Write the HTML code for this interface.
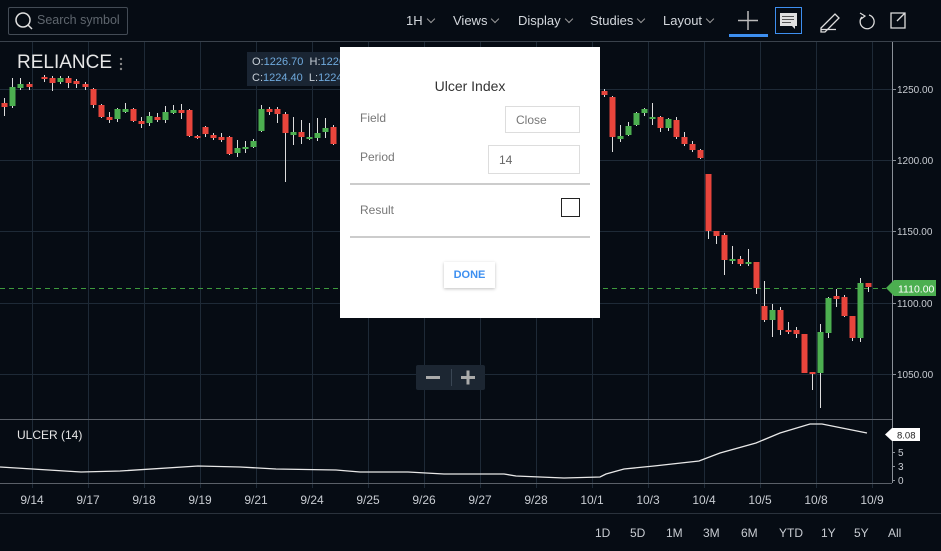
<!DOCTYPE html>
<html><head><meta charset="utf-8"><style>
*{margin:0;padding:0;box-sizing:border-box}
body{width:941px;height:551px;background:#060c14;font-family:"Liberation Sans",sans-serif;overflow:hidden;position:relative;color:#c8ccd2}
.a{position:absolute}
.menu{position:absolute;top:13px;font-size:13px;color:#d4d8dd}
.menu i{display:inline-block;width:6px;height:6px;border-right:1px solid #999;border-bottom:1px solid #999;transform:rotate(45deg);margin-left:5px;position:relative;top:-3px}
.rng{position:absolute;top:526px;font-size:12px;color:#c8ccd2}
</style></head><body>
<svg class="a" style="left:0;top:0" width="941" height="551" id="s">
<g stroke="#1e2a37" stroke-width="1" id="grid"></g>
<line x1="0" y1="41.5" x2="941" y2="41.5" stroke="#3a424c"/>
<line x1="0" y1="419.5" x2="892" y2="419.5" stroke="#5a6068"/>
<line x1="0" y1="483.5" x2="892" y2="483.5" stroke="#5a6068"/>
<line x1="0" y1="513.5" x2="941" y2="513.5" stroke="#2a323c"/>
<line x1="892.5" y1="42" x2="892.5" y2="483" stroke="#8a9098"/>
<line x1="0" y1="288.5" x2="886" y2="288.5" stroke="#3d9a3d" stroke-dasharray="5,4"/>
<g id="c"></g>
<polyline fill="none" stroke="#e8e8e8" stroke-width="1.3" points="0,467 81,472 120,471 198,466 240,467 276,469 336,470 360,472 408,472 444,474 504,474 516,476 564,478 600,477 606,474 624,469 654,466 699,461 720,453 756,443 780,433 810,424 822,424 867,433"/>
<g font-size="10" fill="#c8ccd2">
<text x="897" y="93">1250.00</text><text x="897" y="164">1200.00</text><text x="897" y="235">1150.00</text><text x="897" y="307">1100.00</text><text x="897" y="378">1050.00</text>
<text x="898" y="456">5</text><text x="898" y="470">3</text><text x="898" y="484">0</text>
</g>
<g stroke="#8a9098"><line x1="892" y1="89.5" x2="896" y2="89.5"/><line x1="892" y1="160.5" x2="896" y2="160.5"/><line x1="892" y1="231.5" x2="896" y2="231.5"/><line x1="892" y1="303.5" x2="896" y2="303.5"/><line x1="892" y1="374.5" x2="896" y2="374.5"/><line x1="892" y1="452.5" x2="895" y2="452.5"/><line x1="892" y1="466.5" x2="895" y2="466.5"/><line x1="892" y1="480.5" x2="895" y2="480.5"/></g>
<path d="M886 288 L894 280 H936 V296 H894 Z" fill="#4caf50"/>
<text x="898" y="292.5" font-size="10.5" fill="#fff">1110.00</text>
<path d="M885 434.5 L892 428 H920 V441 H892 Z" fill="#fff"/>
<text x="897" y="438.5" font-size="9.5" fill="#222">8.08</text>
<g id="dl" font-size="12" fill="#c8ccd2" text-anchor="middle"></g>
</svg>

<div class="a" style="left:8px;top:7px;width:120px;height:28px;border:1px solid #434b55;border-radius:2px"></div>
<svg class="a" style="left:14px;top:11px" width="20" height="20"><circle cx="9" cy="9" r="7" fill="none" stroke="#e0e0e0" stroke-width="1.5"/><line x1="14" y1="14" x2="18" y2="18" stroke="#e0e0e0" stroke-width="1.5"/></svg>
<div class="a" style="left:37px;top:13px;font-size:12.5px;color:#5f666e">Search symbol</div>

<div class="menu" style="left:406px">1H<i></i></div>
<div class="menu" style="left:453px">Views<i></i></div>
<div class="menu" style="left:518px">Display<i></i></div>
<div class="menu" style="left:590px">Studies<i></i></div>
<div class="menu" style="left:663px">Layout<i></i></div>
<svg class="a" style="left:729px;top:0" width="212" height="40">
<line x1="19" y1="11" x2="19" y2="30" stroke="#bbb" stroke-width="1.5"/><line x1="9" y1="20.5" x2="29" y2="20.5" stroke="#bbb" stroke-width="1.5"/>
<rect x="0" y="34" width="39" height="3" fill="#3d8ff0"/>
<rect x="46.5" y="7.5" width="26" height="26" fill="none" stroke="#3d8ff0"/>
<path d="M51 13 H68 V26 H66 V29 L63 26 H51 Z" fill="#e0e0e0"/>
<g stroke="#555" stroke-width="1"><line x1="53" y1="16.5" x2="65" y2="16.5"/><line x1="53" y1="19.5" x2="65" y2="19.5"/><line x1="53" y1="22.5" x2="62" y2="22.5"/></g>
<path d="M92 28 L106 14 L110 18 L96 32 H92 Z M92 29.5 H107" fill="none" stroke="#ddd" stroke-width="1.3"/>
<path d="M140 15 A7 7 0 1 1 133 17" fill="none" stroke="#ddd" stroke-width="1.3"/><path d="M131 13 L136 16 L132 19" fill="none" stroke="#ddd" stroke-width="1.2"/>
<path d="M174 13 H162 V28 H176 V16 M168 21 L176 13 M171 13 H176 V18" fill="none" stroke="#ddd" stroke-width="1.3"/>
</svg>

<div class="a" style="left:17px;top:52px;font-size:19px;color:#e6e6e6">RELIANCE</div>
<svg class="a" style="left:119px;top:57px" width="4" height="14"><circle cx="2" cy="2" r="1.2" fill="#888"/><circle cx="2" cy="7" r="1.2" fill="#888"/><circle cx="2" cy="12" r="1.2" fill="#888"/></svg>
<div class="a" style="left:247px;top:52px;width:95px;height:34px;background:#1a2533;font-size:11px;line-height:16px;padding:2px 5px;color:#c8d0d8;white-space:nowrap;overflow:hidden">O:<span style="color:#6fa9dc">1226.70</span> &nbsp;H:<span style="color:#6fa9dc">1226</span><br>C:<span style="color:#6fa9dc">1224.40</span> &nbsp;L:<span style="color:#6fa9dc">1224</span></div>

<div class="a" style="left:340px;top:47px;width:260px;height:271px;background:#fff;color:#555">
<div class="a" style="left:0;width:260px;top:31px;text-align:center;font-size:14px;color:#333">Ulcer Index</div>
<div class="a" style="left:20px;top:64px;font-size:12px;color:#777">Field</div>
<div class="a" style="left:165px;top:59px;width:75px;height:27px;border:1px solid #ddd;font-size:12px;color:#777;padding:6px 0 0 10px">Close</div>
<div class="a" style="left:20px;top:103px;font-size:12px;color:#777">Period</div>
<div class="a" style="left:148px;top:98px;width:92px;height:29px;border:1px solid #ddd;font-size:12px;color:#666;padding:7px 0 0 10px">14</div>
<div class="a" style="left:10px;top:136px;width:240px;height:2px;background:#ccc"></div>
<div class="a" style="left:20px;top:156px;font-size:12px;color:#777">Result</div>
<div class="a" style="left:221px;top:151px;width:19px;height:19px;border:1px solid #222"></div>
<div class="a" style="left:10px;top:189px;width:240px;height:2px;background:#ccc"></div>
<div class="a" style="left:104px;top:215px;width:51px;height:26px;box-shadow:0 1px 3px rgba(0,0,0,.25);font-size:11px;font-weight:bold;color:#3d8ff0;text-align:center;line-height:26px">DONE</div>
</div>

<div class="a" style="left:416px;top:365px;width:69px;height:25px;background:#1c2632;border-radius:2px"></div>
<svg class="a" style="left:416px;top:365px" width="69" height="25"><rect x="10" y="11" width="14" height="3" fill="#aaa"/><line x1="35.5" y1="4" x2="35.5" y2="21" stroke="#3a4654"/><rect x="45" y="11" width="14" height="3" fill="#aaa"/><rect x="50.5" y="5.5" width="3" height="14" fill="#aaa"/></svg>

<div class="a" style="left:17px;top:428px;font-size:12px;color:#e6e6e6">ULCER (14)</div>

<div class="rng" style="left:595px">1D</div><div class="rng" style="left:630px">5D</div><div class="rng" style="left:666px">1M</div><div class="rng" style="left:703px">3M</div><div class="rng" style="left:741px">6M</div><div class="rng" style="left:779px">YTD</div><div class="rng" style="left:821px">1Y</div><div class="rng" style="left:854px">5Y</div><div class="rng" style="left:888px">All</div>

<script>
var ns="http://www.w3.org/2000/svg",g=document.getElementById('grid'),c=document.getElementById('c'),dl=document.getElementById('dl');
function el(p,t,a){var e=document.createElementNS(ns,t);for(var k in a)e.setAttribute(k,a[k]);p.appendChild(e);return e;}
for(var i=0;i<16;i++){var x=32.5+56*i;el(g,'line',{x1:x,y1:42,x2:x,y2:483});}
[89.5,160.5,231.5,303.5,374.5].forEach(function(y){el(g,'line',{x1:0,y1:y,x2:892,y2:y});});
var L=['9/14','9/17','9/18','9/19','9/21','9/24','9/25','9/26','9/27','9/28','10/1','10/3','10/4','10/5','10/8','10/9'];
L.forEach(function(t,i){var e=el(dl,'text',{x:32+56*i,y:504});e.textContent=t;el(g,'line',{x1:32.5+56*i,y1:483,x2:32.5+56*i,y2:488});});
var R='#e8453c',G='#4caf50';
var d=[[4,103,107,R,98,116],[12,87,106,G,78,108],[20,84,88,G,78,90],[29,84,87,R,82,90],[44,77,79,R,75,82],[52,78,83,R,76,91],[60,78,82,G,76,84],[68,78,83,R,76,88],[76,81,84,R,79,88],[85,84,87,R,82,90],[93,89,105,R,88,108],[101,105,117,R,104,118],[109,117,120,R,112,123],[117,109,119,G,108,122],[125,109,112,G,103,113],[133,109,121,R,108,122],[141,121,124,R,117,128],[149,116,123,G,112,126],[157,117,120,R,113,122],[165,112,120,G,106,123],[173,110,113,G,105,114],[181,110,113,R,104,119],[189,110,136,R,109,137],[197,136,138,R,135,139],[205,127,134,R,126,137],[213,135,138,R,133,140],[221,137,140,R,133,142],[229,137,154,R,136,155],[237,148,153,G,140,157],[245,147,148,G,141,153],[253,141,147,G,139,148],[261,109,131,G,105,132],[269,109,112,R,107,115],[277,109,114,R,107,123],[285,114,133,R,112,182],[293,132,135,G,117,145],[301,132,137,R,120,144],[309,137,139,G,123,140],[317,133,138,G,118,141],[325,128,132,G,118,138],[333,127,144,R,125,145],
[604,91,95,R,89,97],[612,97,137,R,96,152],[620,136,139,G,125,142],[628,126,135,G,122,136],[636,113,125,G,112,126],[644,109,113,G,108,116],[652,117,119,G,103,125],[660,117,128,R,116,132],[668,119,128,G,118,131],[676,120,137,R,117,139],[684,137,144,R,132,146],[692,144,150,R,141,152],[700,150,158,R,149,159],[708,174,231,R,174,239],[716,231,236,R,231,244],[724,235,260,R,233,275],[732,259,261,G,246,264],[740,259,264,R,256,266],[748,262,264,G,249,266],[756,262,288,R,262,294],[764,306,320,R,281,322],[772,310,320,G,304,337],[780,310,330,R,307,335],[788,330,332,R,322,334],[796,330,334,R,327,338],[804,334,373,R,334,373],[812,372,374,R,372,390],[820,332,373,G,324,408],[828,298,333,G,297,338],[836,296,299,R,289,307],[844,297,316,R,295,317],[852,316,338,R,316,341],[860,283,338,G,278,342],[868,283,287,R,283,292]];
d.forEach(function(a){el(c,'line',{x1:a[0]+.5,y1:a[4],x2:a[0]+.5,y2:a[5],stroke:'#ddd','stroke-width':1});el(c,'rect',{x:a[0]-2.5,y:a[1],width:6,height:Math.max(2,a[2]-a[1]),fill:a[3]});});
</script>
</body></html>
